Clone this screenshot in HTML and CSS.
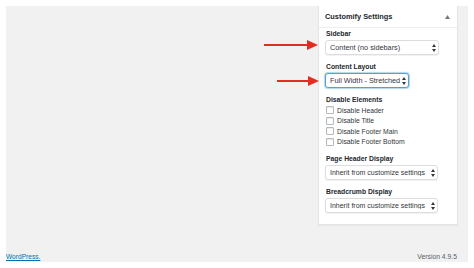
FILE: index.html
```html
<!DOCTYPE html>
<html lang="en">
<head>
    <meta charset="UTF-8">
    <meta name="viewport" content="width=device-width, initial-scale=1.0">
    <title>Customify Settings</title>
    <link rel="stylesheet" href="styles.css">
</head>
<body>
    <div class="wrap">
        <div class="content">
            <div class="postbox">
                <div class="postbox-head">
                    <h2 class="postbox-title">Customify Settings</h2>
                    <svg class="toggle" width="5" height="4" viewBox="0 0 5 4"><polygon points="2.5,0 5,4 0,4" fill="#72777c"/></svg>
                </div>
                <div class="postbox-body">
                    <div class="field">
                        <label class="field-label" for="sidebar">Sidebar</label>
                        <span class="select-box">
                            <select id="sidebar" class="select w-sidebar">
                                <option>Content (no sidebars)</option>
                            </select>
                            <svg class="select-arrow" width="4" height="8" viewBox="0 0 4 8"><polygon points="2,0 4,3 0,3" fill="#32373c"/><polygon points="0,5 4,5 2,8" fill="#32373c"/></svg>
                        </span>
                    </div>
                    <div class="field">
                        <label class="field-label" for="layout">Content Layout</label>
                        <span class="select-box">
                            <select id="layout" class="select w-layout focused">
                                <option>Full Width - Stretched</option>
                            </select>
                            <svg class="select-arrow" width="4" height="8" viewBox="0 0 4 8"><polygon points="2,0 4,3 0,3" fill="#32373c"/><polygon points="0,5 4,5 2,8" fill="#32373c"/></svg>
                        </span>
                    </div>
                    <div class="field">
                        <div class="field-label tight">Disable Elements</div>
                        <label class="check-row"><input type="checkbox" class="check"> Disable Header</label>
                        <label class="check-row"><input type="checkbox" class="check"> Disable Title</label>
                        <label class="check-row"><input type="checkbox" class="check"> Disable Footer Main</label>
                        <label class="check-row"><input type="checkbox" class="check"> Disable Footer Bottom</label>
                    </div>
                    <div class="field">
                        <label class="field-label" for="page_header">Page Header Display</label>
                        <span class="select-box">
                            <select id="page_header" class="select w-inherit">
                                <option>Inherit from customize settings</option>
                            </select>
                            <svg class="select-arrow" width="4" height="8" viewBox="0 0 4 8"><polygon points="2,0 4,3 0,3" fill="#32373c"/><polygon points="0,5 4,5 2,8" fill="#32373c"/></svg>
                        </span>
                    </div>
                    <div class="field last">
                        <label class="field-label" for="breadcrumb">Breadcrumb Display</label>
                        <span class="select-box">
                            <select id="breadcrumb" class="select w-inherit">
                                <option>Inherit from customize settings</option>
                            </select>
                            <svg class="select-arrow" width="4" height="8" viewBox="0 0 4 8"><polygon points="2,0 4,3 0,3" fill="#32373c"/><polygon points="0,5 4,5 2,8" fill="#32373c"/></svg>
                        </span>
                    </div>
                </div>
            </div>
        </div>
        <div class="footer">
            <a href="#" class="footer-link">WordPress.</a>
            <span class="version">Version 4.9.5</span>
        </div>
        <!-- annotation arrows -->
        <svg class="arrow arrow-1" width="54" height="10" viewBox="0 0 54 10"><line x1="0" y1="5" x2="44" y2="5" stroke="#e32d22" stroke-width="2"/><polygon points="43,0 54,5 43,10" fill="#e32d22"/></svg>
        <svg class="arrow arrow-2" width="42" height="10" viewBox="0 0 42 10"><line x1="0" y1="5" x2="32" y2="5" stroke="#e32d22" stroke-width="2"/><polygon points="31,0 42,5 31,10" fill="#e32d22"/></svg>
    </div>
</body>
</html>
```

FILE: styles.css
```css
* {
    padding: 0;
    margin: 0;
    box-sizing: border-box;
}
body {
    font-family: "Liberation Sans", Arial, sans-serif;
    background: #ffffff;
    color: #23282d;
    overflow: hidden;
}
.wrap {
    position: relative;
    margin: 6px 6px 0 6px;
    height: 256px;
    background: #f1f1f1;
    display: flex;
    flex-direction: column;
}
.content {
    display: flex;
    justify-content: flex-end;
    padding-right: 10px;
}
.postbox {
    width: 140px;
    background: #ffffff;
    border: 1px solid #e5e5e5;
    border-top: none;
    box-shadow: 0 1px 1px rgba(0, 0, 0, 0.04);
}
.postbox-head {
    height: 22px;
    padding: 0 7px 0 6px;
    border-bottom: 1px solid #eeeeee;
    display: flex;
    align-items: center;
    justify-content: space-between;
}
.postbox-title {
    font-size: 7.4px;
    font-weight: bold;
    color: #23282d;
}
.toggle {
    margin-top: 1px;
}
.postbox-body {
    padding: 1px 6px 11px 6px;
}
.field {
    margin-bottom: 7px;
}
.field.last {
    margin-bottom: 0;
}
.field-label {
    display: block;
    font-size: 6.8px;
    font-weight: bold;
    line-height: 9px;
    margin-bottom: 2px;
    padding-left: 1px;
}
.field-label.tight {
    margin-bottom: 1px;
}
.select-box {
    position: relative;
    display: block;
    width: max-content;
}
.select {
    appearance: none;
    -webkit-appearance: none;
    display: block;
    height: 15px;
    padding: 0 4px 0 4px;
    font-family: "Liberation Sans", Arial, sans-serif;
    font-size: 7.3px;
    color: #32373c;
    background: #ffffff;
    border: 1px solid #dddddd;
    border-radius: 3px;
    box-shadow: 0 1px 1px rgba(0, 0, 0, 0.06);
    outline: none;
}
.select.focused {
    border-color: #5b9dd9;
    box-shadow: 0 0 1px 1px rgba(30, 140, 190, 0.35);
}
.w-sidebar {
    width: 114px;
}
.w-layout {
    width: 84px;
}
.w-inherit {
    width: 113px;
    font-size: 7px;
}
.select-arrow {
    position: absolute;
    right: 3px;
    top: 3.5px;
}
.check-row {
    display: flex;
    align-items: center;
    gap: 3px;
    height: 10.5px;
    font-size: 6.8px;
    color: #32373c;
    padding-left: 1px;
}
.check {
    appearance: none;
    -webkit-appearance: none;
    width: 8px;
    height: 8px;
    border: 1px solid #b4b9be;
    border-radius: 1px;
    background: #ffffff;
    box-shadow: inset 0 1px 1px rgba(0, 0, 0, 0.08);
}
.footer {
    margin-top: auto;
    display: flex;
    justify-content: space-between;
    align-items: flex-end;
    padding: 0 11px 1px 0;
    line-height: 9px;
}
.footer-link {
    font-size: 6.6px;
    color: #0073aa;
}
.version {
    font-size: 6.8px;
    color: #555d66;
}
.arrow {
    position: absolute;
}
.arrow-1 {
    left: 258px;
    top: 34px;
}
.arrow-2 {
    left: 271px;
    top: 70px;
}
```
